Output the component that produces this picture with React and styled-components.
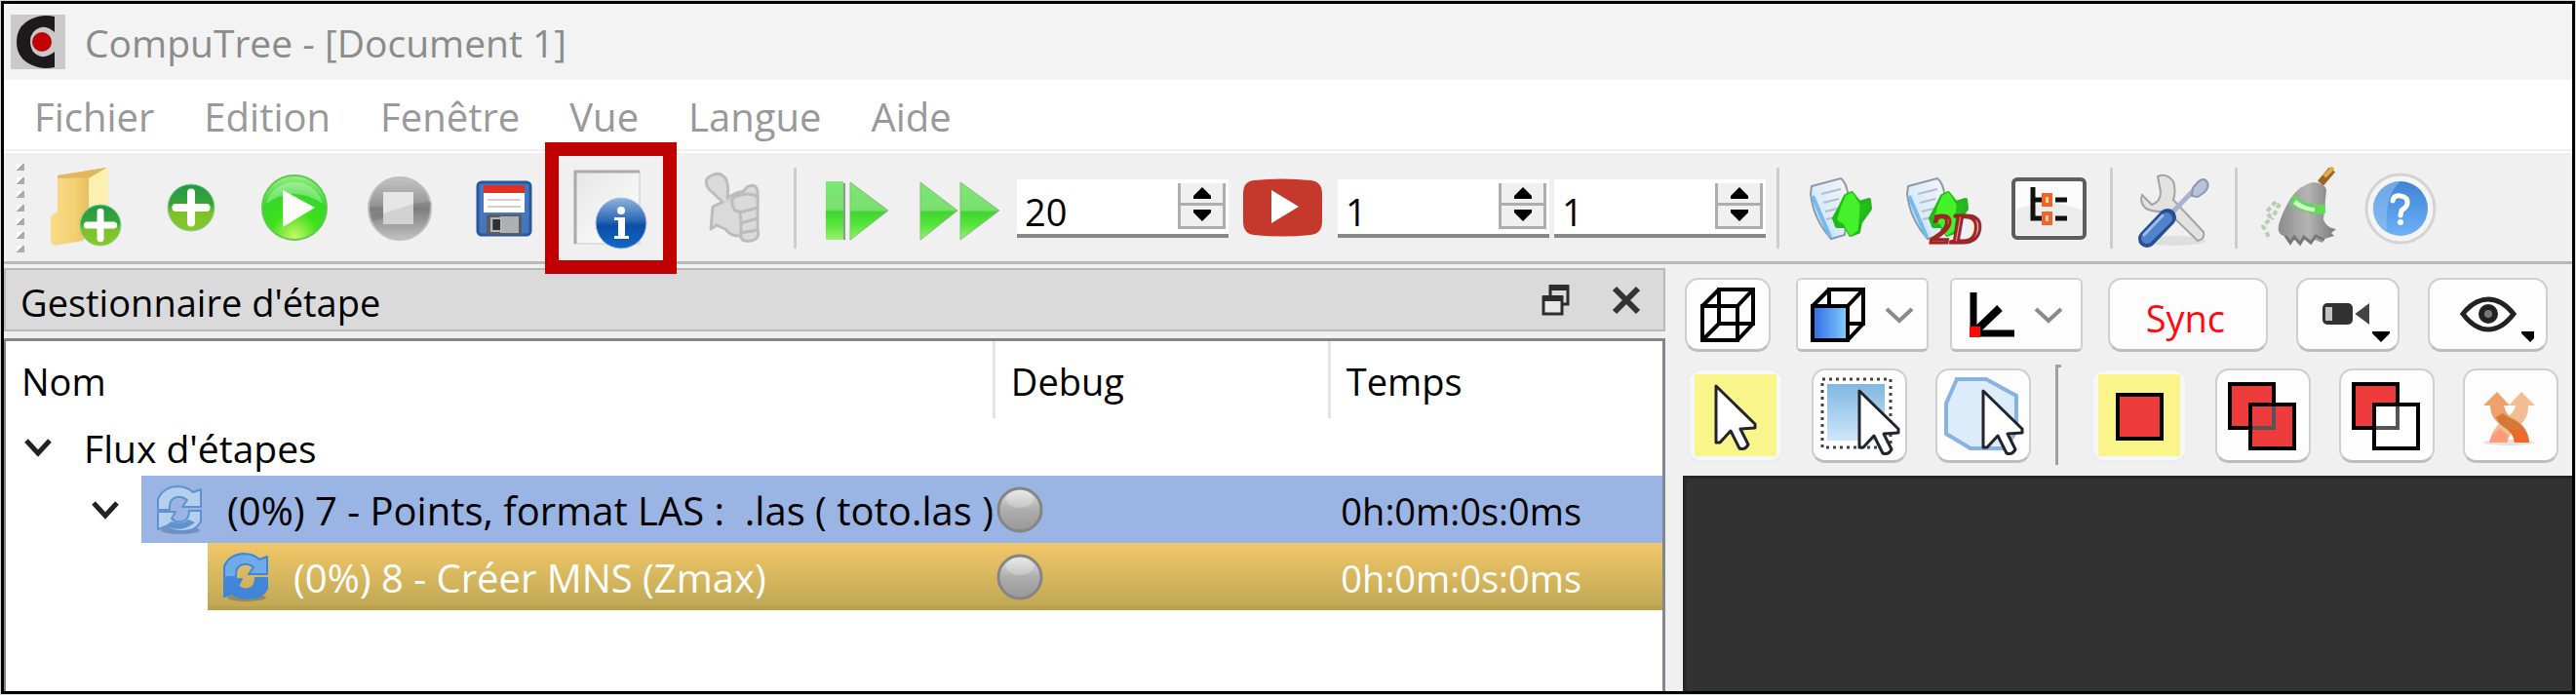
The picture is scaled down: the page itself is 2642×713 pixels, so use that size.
import React from "react";
import styled, { createGlobalStyle, css } from "styled-components";

const GlobalStyle = createGlobalStyle`
  * { box-sizing: border-box; }
  body { margin: 0; background: #d4dcd8; }
  button, input, th, td { font: inherit; color: inherit; }
  button { margin: 0; padding: 0; border: 0; background: none; }
  svg { display: block; }
`;

const Window = styled.div`
  display: flex;
  flex-direction: column;
  min-height: 100vh;
  border: 1px solid #d4dcd8;
  outline: 3px solid #000;
  outline-offset: -4px;
  padding: 3px;
  background: #f0f0f0;
  color: #000;
  font-family: "Open Sans", "Noto Sans", sans-serif;
  font-size: 38px;
  line-height: 52px;
`;

const TitleBar = styled.header`
  display: flex;
  align-items: center;
  gap: 20px;
  height: 78px;
  padding-left: 7px;
  background: #f3f3f3;
  color: #8b8b8b;
`;

const Title = styled.h1`
  margin: 0;
  padding-top: 2px;
  font-size: 39px;
  font-weight: 400;
`;

const MenuBar = styled.nav`
  display: flex;
  align-items: center;
  gap: 51px;
  height: 77px;
  padding: 4px 31px 0;
  background: #fff;
  border-bottom: 6px double #f0f0f0;
  color: #999;
  font-size: 40px;
`;

const MenuItem = styled.button`
  white-space: nowrap;
`;

const ToolBar = styled.div`
  display: flex;
  align-items: center;
  height: 112px;
  border-bottom: 3px solid #b8b8b8;
`;

const Grip = styled.div`
  display: flex;
  flex-direction: column;
  gap: 7px;
  padding: 0 10px 0 13px;
`;

const GripDot = styled.i`
  width: 8px;
  height: 7px;
  background: linear-gradient(135deg, #fff 45%, #aaa 46%);
`;

const Tool = styled.button`
  position: relative;
  flex: none;
  width: 107px;
  height: 109px;
`;

const Highlight = styled.span`
  position: absolute;
  z-index: 2;
  inset: -13px -17px -13px -11px;
  border: 14px solid #c00000;
  pointer-events: none;
`;

const Divider = styled.i`
  flex: none;
  width: 3px;
  height: 83px;
  margin: 0 9px;
  background: #cdcdcd;
  visibility: ${(p) => (p.$blank ? "hidden" : "visible")};
`;

const Spin = styled.div`
  display: flex;
  flex: none;
  width: 217px;
  height: 60px;
  margin: 0 2px 0 3px;
  padding-right: 3px;
  background: #fff;
  border-bottom: 4px solid #888;
`;

const SpinInput = styled.input`
  flex: 1;
  min-width: 0;
  padding: 10px 0 0 8px;
  border: 0;
  background: #fff;
  line-height: 40px;
`;

const SpinButtons = styled.div`
  display: flex;
  flex-direction: column;
  width: 49px;
  margin: 4px 0 5px;
  background: #f0f0f0;
  border: 3px solid #adadad;
  border-top: 0;
`;

const SpinButton = styled.button`
  display: flex;
  flex: 1;
  align-items: center;
  justify-content: center;
  & + & { border-top: 3px solid #adadad; }
`;

const Main = styled.main`
  display: grid;
  grid-template-columns: minmax(0, 11fr) minmax(0, 6fr);
  flex: 1;
`;

const Dock = styled.section`
  display: flex;
  flex-direction: column;
  gap: 7px;
  padding-top: 4px;
`;

const DockTitle = styled.div`
  display: flex;
  align-items: center;
  gap: 42px;
  height: 65px;
  padding: 0 23px 0 15px;
  border: 2px solid #b8b8b8;
  background: #dadada;
`;

const DockName = styled.h2`
  flex: 1;
  margin: 0;
  padding-top: 5px;
  font-size: 38px;
  font-weight: 400;
`;

const TreeFrame = styled.div`
  flex: 1;
  border: 3px solid #82878f;
  border-bottom: 0;
  border-left-width: 2px;
  background: #fff;
`;

const Tree = styled.table`
  width: 100%;
  table-layout: fixed;
  border-collapse: collapse;
  text-align: left;
`;

const HeadCell = styled.th`
  height: 79px;
  padding: 2px 16px 0;
  font-weight: 400;
  & + & { border-left: 3px solid #e5e5e5; }
`;

const fills = {
  none: css`background: transparent;`,
  blue: css`background: #9ab4e4;`,
  gold: css`
    background: linear-gradient(#f2c768, #c0a855 94%, #b9a14b 95%);
    color: #fff;
  `,
};

const Row = styled.tr`
  height: ${(p) => (p.$fill === "none" ? 59 : 69)}px;
`;

const Cell = styled.td`
  height: inherit;
  padding: 0 0 0 ${(p) => p.$inset || 0}px;
  ${(p) => fills[p.$fill]}
`;

const Branch = styled.div`
  display: flex;
  align-items: stretch;
  height: 100%;
  padding-left: ${(p) => p.$depth * 69}px;
`;

const Expander = styled.button`
  display: flex;
  flex: none;
  align-items: center;
  width: 70px;
  padding-left: 18px;
`;

const BranchLabel = styled.div`
  display: flex;
  flex: 1;
  align-items: center;
  gap: 24px;
  height: ${(p) => (p.$fill === "none" ? 59 : 69)}px;
  padding-left: ${(p) => (p.$fill === "none" ? 10 : 14)}px;
  font-size: ${(p) => (p.$fill === "none" ? 39 : 40)}px;
  white-space: pre;
  ${(p) => fills[p.$fill]}
`;

const RowText = styled.span`
  display: block;
  padding-top: 3px;
`;

const Document = styled.section`
  display: flex;
  flex-direction: column;
  padding-left: 18px;
`;

const ViewBar = styled.div`
  display: flex;
  align-items: flex-start;
  gap: ${(p) => p.$gap}px;
  padding: 14px 0 0 ${(p) => p.$inset}px;
  height: ${(p) => p.$height}px;
`;

const ButtonGroup = styled.div`
  display: flex;
  gap: ${(p) => p.$gap}px;
`;

const ViewButton = styled.button`
  display: flex;
  flex: none;
  align-items: center;
  justify-content: center;
  width: ${(p) => p.$width}px;
  height: 76px;
  border: 2px solid #cfcfcf;
  border-bottom: 3px solid #bdbdbd;
  border-radius: 14px;
  background: #fdfdfd;
`;

const ComboButton = styled(ViewButton)`
  gap: 20px;
  width: 136px;
  border-radius: 6px;
`;

const SyncButton = styled(ViewButton)`
  padding: 6px 6px 0 0;
  color: #ff0a14;
`;

const ModeButton = styled(ViewButton)`
  width: 98px;
  height: 97px;
  ${(p) => p.$active && css`
    border-color: #eaeef0;
    background: linear-gradient(#faf58a, #faf58a) center / 84px 84px no-repeat #f6f7f8;
  `}
`;

const ModeDivider = styled.i`
  flex: none;
  width: 6px;
  height: 103px;
  margin: -4px 2px 0 -4px;
  border-left: 3px solid #a0a0a0;
  border-top: 3px solid #a0a0a0;
`;

const Viewport = styled.div`
  flex: 1;
  border: solid #262626;
  border-width: 3px 0 0 3px;
  background: #323232;
`;

const Defs = styled.svg`
  position: absolute;
`;

function ToolIcon({ children }) {
  return (
    <svg width="107" height="109" viewBox="0 0 107 109" aria-hidden="true">
      {children}
    </svg>
  );
}

function Gradients() {
  return (
    <Defs width="0" height="0" aria-hidden="true">
      <defs>
        <linearGradient id="plus" x1="0" y1="0" x2="0" y2="1">
          <stop offset="0" stopColor="#1f9a48" /><stop offset=".45" stopColor="#3ba537" /><stop offset=".6" stopColor="#7cc12a" /><stop offset="1" stopColor="#86c82c" />
        </linearGradient>
        <radialGradient id="go" cx=".5" cy=".95" r=".95">
          <stop offset="0" stopColor="#c8f56a" /><stop offset=".4" stopColor="#3ee01c" /><stop offset=".7" stopColor="#35d82a" /><stop offset="1" stopColor="#9df08c" />
        </radialGradient>
        <linearGradient id="grey" x1="0" y1="0" x2="0" y2="1">
          <stop offset="0" stopColor="#c4c4c4" /><stop offset=".45" stopColor="#959595" /><stop offset=".5" stopColor="#7d7d7d" /><stop offset="1" stopColor="#c2c2c2" />
        </linearGradient>
        <linearGradient id="folder" x1="0" y1="0" x2="1" y2="0">
          <stop offset="0" stopColor="#f9dc88" /><stop offset=".45" stopColor="#f3cf72" /><stop offset="1" stopColor="#d6a645" />
        </linearGradient>
        <linearGradient id="info" x1="0" y1="0" x2="0" y2="1">
          <stop offset="0" stopColor="#8fb4dd" /><stop offset=".45" stopColor="#2b68b4" /><stop offset=".55" stopColor="#0d4ea6" /><stop offset="1" stopColor="#1268c8" />
        </linearGradient>
        <linearGradient id="page" x1="0" y1="0" x2="1" y2="1">
          <stop offset="0" stopColor="#e6e6e6" /><stop offset="1" stopColor="#ffffff" />
        </linearGradient>
        <linearGradient id="lime" x1="0" y1="0" x2="0" y2="1">
          <stop offset="0" stopColor="#7be873" /><stop offset=".48" stopColor="#7adf70" /><stop offset=".52" stopColor="#3fd62e" /><stop offset=".75" stopColor="#56e63c" /><stop offset="1" stopColor="#9cf070" />
        </linearGradient>
        <linearGradient id="sheet" x1="0" y1="1" x2="1" y2="0">
          <stop offset="0" stopColor="#8fd0fa" /><stop offset=".4" stopColor="#d8ebfb" /><stop offset="1" stopColor="#f4f4f8" />
        </linearGradient>
        <linearGradient id="help" x1="0" y1="0" x2="0" y2="1">
          <stop offset="0" stopColor="#3f83d4" /><stop offset="1" stopColor="#6db2f7" />
        </linearGradient>
        <linearGradient id="broom" x1="0" y1="0" x2="1" y2="0">
          <stop offset="0" stopColor="#8c8c8c" /><stop offset=".5" stopColor="#b4b4b4" /><stop offset="1" stopColor="#7a7a7a" />
        </linearGradient>
        <linearGradient id="ball" x1="0" y1="0" x2="0" y2="1">
          <stop offset="0" stopColor="#e6e6e6" /><stop offset=".5" stopColor="#adadad" /><stop offset="1" stopColor="#989898" />
        </linearGradient>
        <linearGradient id="face" x1="0" y1="0" x2="1" y2="0">
          <stop offset="0" stopColor="#3069e6" /><stop offset="1" stopColor="#84d0fb" />
        </linearGradient>
        <linearGradient id="area" x1="0" y1="0" x2="0" y2="1">
          <stop offset="0" stopColor="#7fb8de" /><stop offset="1" stopColor="#cfe6fb" />
        </linearGradient>
      </defs>
    </Defs>
  );
}

const PlusBall = ({ cx, cy, r }) => (
  <g>
    <circle cx={cx} cy={cy} r={r} fill="url(#plus)" stroke="#8fcf9a" strokeWidth="1" />
    <path d={`M${cx - r * 0.65} ${cy}H${cx + r * 0.65}M${cx} ${cy - r * 0.65}V${cy + r * 0.65}`} stroke="#fff" strokeWidth={r / 3} strokeLinecap="round" />
  </g>
);

const OpenIcon = () => (
  <ToolIcon>
    <path d="M55 22 76 13V88L60 94Z" fill="#fbf0b0" />
    <path d="M24 21 74 13 56 24V78L50 88 21 93 17 90V63L24 58Z" fill="url(#folder)" />
    <path d="M24 21 74 13 56 23 24 24Z" fill="#e0b75c" />
    <PlusBall cx={68} cy={72} r={21} />
  </ToolIcon>
);
const AddIcon = () => <ToolIcon><PlusBall cx={54} cy={54} r={24} /></ToolIcon>;
const PlayIcon = () => (
  <ToolIcon>
    <circle cx="53" cy="54" r="33" fill="url(#go)" stroke="#62c94e" strokeWidth="2" />
    <path d="M24 50A30 30 0 0 1 82 50Q52 30 24 50Z" fill="#fff" opacity=".3" />
    <path d="M41 36V74L74 54Z" fill="#fbfff6" />
  </ToolIcon>
);
const StopIcon = () => (
  <ToolIcon>
    <circle cx="54" cy="55" r="32" fill="url(#grey)" stroke="#bdbdbd" strokeWidth="2" />
    <path d="M24 62Q55 50 86 48V52Q60 58 26 68Z" fill="#777" opacity=".5" />
    <rect x="37" y="38" width="31" height="33" fill="#e6e6e6" />
    <path d="M37 60 68 50V71H37Z" fill="#d2d2d2" />
  </ToolIcon>
);
const SaveIcon = () => (
  <ToolIcon>
    <rect x="27" y="28" width="54" height="54" rx="4" fill="#4477bd" stroke="#2856a0" strokeWidth="3" />
    <rect x="33" y="31" width="42" height="28" fill="#fff" />
    <rect x="33" y="31" width="42" height="8" fill="#dd3122" />
    <path d="M37 46H71M37 53H71" stroke="#d0d0d0" strokeWidth="2" />
    <rect x="36" y="61" width="36" height="21" rx="2" fill="#5a5d62" />
    <rect x="50" y="63" width="19" height="17" fill="#aeb0b2" />
    <rect x="43" y="66" width="7" height="11" fill="#2e3136" /><rect x="41" y="65" width="10" height="13" fill="none" stroke="#b5b5b5" strokeWidth="2" />
  </ToolIcon>
);
const InfoIcon = () => (
  <ToolIcon>
    <rect x="20" y="17" width="66" height="74" fill="url(#page)" stroke="#c9c9c9" strokeWidth="1" />
    <path d="M20 91V17H86" fill="none" stroke="#a9a9a9" strokeWidth="3" />
    <circle cx="67" cy="70" r="26" fill="url(#info)" stroke="#a9c2e0" strokeWidth="1" />
    <circle cx="67" cy="57" r="4" fill="#fff" />
    <path d="M60 64H71V83H75V86H60V83H64V67H60Z" fill="#fff" />
  </ToolIcon>
);
const HandIcon = () => (
  <ToolIcon>
    <g fill="#dadada" stroke="#bcbcbc" strokeWidth="3" strokeLinejoin="round">
      <path d="M33 53 31 76 37 72 46 76Q52 84 62 83L72 76V52L52 44Z" />
      <path d="M44 49 29 35Q23 26 30 22Q40 16 46 24Q50 31 48 44L57 39 66 37" />
      <path d="M58 46Q54 40 64 38L68 33Q77 28 79 37V50L60 58Z" />
      <path d="M55 43Q70 37 79 43V54Q68 62 56 57Q50 48 55 43Z" />
      <path d="M61 59 79 54V65L62 70ZM62 70 79 65V77L62 80Z" />
      <path d="M62 80 79 77Q82 86 72 88Q60 90 62 80Z" />
    </g>
  </ToolIcon>
);
const StepIcon = () => (
  <ToolIcon>
    <path d="M21 27H39V87H21Z" fill="url(#lime)" /><path d="M40 29V87" stroke="#8a9a88" strokeWidth="2" />
    <path d="M46 28 85 57 46 87Z" fill="url(#lime)" stroke="#86b77e" strokeWidth="1" />
  </ToolIcon>
);
const ForwardIcon = () => (
  <ToolIcon>
    <path d="M11 28 49 57 11 87ZM52 28 92 57 52 87Z" fill="url(#lime)" stroke="#86b77e" strokeWidth="1" />
  </ToolIcon>
);
const VideoIcon = () => (
  <ToolIcon>
    <path d="M24 26Q53 23 82 26Q94 27 94 40V68Q94 81 82 82Q53 85 24 82Q13 81 13 68V40Q13 27 24 26Z" fill="#c5392d" />
    <path d="M42 36V70L70 53Z" fill="#fff" />
  </ToolIcon>
);
const ExportShape = () => (
  <g>
    <path d="M24 32 54 24Q60 28 62 44L58 82 44 86Q26 66 23 40Z" fill="url(#sheet)" stroke="#8c98a4" strokeWidth="2" />
    <path d="M34 40 54 35M36 49 52 45M38 58 50 55M39 66 48 64" stroke="#b7bdc6" strokeWidth="2" />
    <path d="M25 42 43 84" stroke="#74b9f0" strokeWidth="4" />
    <path d="M65 39 73 49 83 46 84 55 74 69 72 79 64 82 59 73 50 73 47 65 54 52 59 42Z" fill="#22c21a" stroke="#22b81c" strokeWidth="4" strokeLinejoin="round" />
    <path d="M65 40 72 51 71 68 70 77 64 81 58 70 52 66 56 52 60 43Z" fill="#45f22a" stroke="#45f22a" strokeWidth="3" strokeLinejoin="round" />
  </g>
);
const ExportIcon = () => <ToolIcon><ExportShape /></ToolIcon>;
const Export2dIcon = () => (
  <ToolIcon>
    <g transform="translate(-8 0)"><ExportShape /></g>
    <text x="39" y="90" fontFamily="Liberation Serif, serif" fontStyle="italic" fontSize="42" fill="#f4dcdc" stroke="#9d2525" strokeWidth="3">2D</text>
  </ToolIcon>
);
const StepTreeIcon = () => (
  <ToolIcon>
    <rect x="17" y="25" width="73" height="60" rx="4" fill="#fcfcfc" stroke="#5d5d5d" strokeWidth="4" />
    <path d="M20 56Q55 42 88 57V82H20Z" fill="#ececec" />
    <path d="M37 33V65H46M37 46H46M60 46H72M60 65H72" stroke="#111" strokeWidth="5" fill="none" />
    <path d="M48 41H55V51H48ZM48 60H55V70H48Z" fill="#ffd0a0" stroke="#f0642a" strokeWidth="4" />
  </ToolIcon>
);
const SettingsIcon = () => (
  <ToolIcon>
    <ellipse cx="54" cy="88" rx="32" ry="5" fill="#dedede" />
    <path d="M37 22Q46 18 53 27Q56 37 53 46L84 79Q86 86 78 88L46 57Q35 60 25 55Q18 49 21 41L31 51Q40 48 40 38Z" fill="#e2e2e2" stroke="#a3a3a3" strokeWidth="2" />
    <path d="M52 59 75 35" stroke="#a9b3cb" strokeWidth="5" />
    <path d="M73 34 78 28Q84 22 88 28 90 33 85 38L78 43 72 42Z" fill="#b8c3da" stroke="#8d97b0" strokeWidth="2" />
    <path d="M26 86 47 64" stroke="#274f93" strokeWidth="18" strokeLinecap="round" />
    <path d="M26 85 46 65" stroke="#5083cc" strokeWidth="12" strokeLinecap="round" />
    <path d="M23 82 42 62" stroke="#9dbde8" strokeWidth="3" strokeLinecap="round" />
  </ToolIcon>
);
const CleanIcon = () => (
  <ToolIcon>
    <path d="M30 48 21 58 25 65 17 73 23 84M34 50 26 66" fill="none" stroke="#b9ccb6" strokeWidth="4" strokeDasharray="5 3" />
    <path d="M76 29 88 15" stroke="#9c6523" strokeWidth="8" /><path d="M80 22 89 13" stroke="#e2ad49" strokeWidth="4" />
    <path d="M68 28Q80 28 82 36L79 66Q82 75 92 76L87 80 90 83 80 86 78 90 70 87 66 91 60 87 54 91 50 87 43 90 41 84Q31 82 33 72Q36 60 45 45Q54 31 68 28Z" fill="url(#broom)" />
    <path d="M49 41Q62 54 81 50V60Q60 63 45 50Z" fill="#5fdc55" /><path d="M51 46Q60 54 70 54V58Q58 58 48 50Z" fill="#d9f6d3" />
    <path d="M40 83 45 90 49 84 55 91 59 84 66 90 71 83 80 87" fill="none" stroke="#777" strokeWidth="3" />
  </ToolIcon>
);
const HelpIcon = () => (
  <ToolIcon>
    <circle cx="51" cy="55" r="35" fill="#f4f4f4" stroke="#d3d3d3" strokeWidth="3" />
    <circle cx="51" cy="55" r="28" fill="url(#help)" />
    <path d="M27 70A28 28 0 0 1 51 27Q34 42 37 78Z" fill="#9bc7f2" opacity=".5" />
    <path d="M43 47Q44 41 51 42Q59 43 58 50Q57 54 52 57L51 62" fill="none" stroke="#fff" strokeWidth="5" strokeLinecap="round" />
    <circle cx="51" cy="69" r="3" fill="#fff" />
  </ToolIcon>
);

const ChevronIcon = () => (
  <svg width="30" height="20" viewBox="0 0 30 20"><path d="M3 3 15 16 27 3" fill="none" stroke="#222" strokeWidth="5" /></svg>
);
const SyncIcon = ({ faded }) => {
  const main = faded ? "#5e93d0" : "#3f86d8";
  const light = faded ? "#b4d0ee" : "#6fabea";
  return (
    <svg width="50" height="52" viewBox="0 0 50 52">
      <ellipse cx="26" cy="47" rx="20" ry="4" fill="#2b3d66" opacity=".3" />
      <g stroke={main} strokeWidth="2" strokeLinejoin="round">
        <path d="M3 26V15Q8 3 22 2Q33 2 39 8L47 5V23H28L33 16Q28 12 22 13Q14 15 15 26Z" fill={light} />
        <path d="M47 27V38Q42 48 28 48Q17 48 11 43L3 46V28H21L17 35Q22 40 28 38Q35 36 35 27Z" fill={faded ? light : main} />
      </g>
      <path d="M11 42Q26 51 41 39L34 36Q28 42 17 38Z" fill={main} />
    </svg>
  );
};
const BallIcon = () => (
  <svg width="50" height="50" viewBox="0 0 50 50">
    <circle cx="25" cy="25" r="22" fill="url(#ball)" stroke="#858585" strokeWidth="3" />
    <ellipse cx="25" cy="14" rx="14" ry="9" fill="#fff" opacity=".25" />
  </svg>
);
const Arrow = ({ up }) => (
  <svg width="18" height="12" viewBox="0 0 18 12"><path d={up ? "M9 0 18 9V12H0V9Z" : "M9 12 18 3V0H0V3Z"} fill="#000" /></svg>
);
const FloatIcon = () => (
  <svg width="30" height="32" viewBox="0 0 30 32">
    <path d="M9 12V2H27V20H20" fill="none" stroke="#2c2c2c" strokeWidth="3" /><path d="M8 3H28" stroke="#2c2c2c" strokeWidth="6" />
    <rect x="2" y="13" width="19" height="17" fill="#e8e8e8" stroke="#2c2c2c" strokeWidth="3" /><path d="M1 14H22" stroke="#2c2c2c" strokeWidth="6" />
  </svg>
);
const CloseIcon = () => (
  <svg width="30" height="30" viewBox="0 0 30 30"><path d="M3 3 27 27M27 3 3 27" stroke="#333" strokeWidth="6" /></svg>
);
const CubeIcon = ({ solid }) => (
  <svg width="56" height="56" viewBox="0 0 56 56" fill="none" stroke="#000" strokeWidth="4">
    {solid
      ? <path d="M19 19V2H54V37H38M2 19 19 2M38 19 54 2M38 54 54 37" />
      : <path d="M19 2H54V37H19ZM2 19 19 2M38 19 54 2M38 54 54 37M2 54 19 37" />}
    <rect x="2" y="19" width="36" height="35" fill={solid ? "url(#face)" : "none"} />
  </svg>
);
const AxesIcon = () => (
  <svg width="46" height="46" viewBox="0 0 46 46">
    <path d="M4 0V42H46" fill="none" stroke="#000" strokeWidth="7" /><path d="M8 38 31 16" stroke="#000" strokeWidth="8" />
    <rect x="0" y="35" width="11" height="11" fill="#fa0a0a" />
  </svg>
);
const DropIcon = () => (
  <svg width="30" height="18" viewBox="0 0 30 18"><path d="M2 3 15 15 28 3" fill="none" stroke="#8a8a8a" strokeWidth="4" /></svg>
);
const CameraIcon = () => (
  <svg width="86" height="60" viewBox="0 0 86 60">
    <rect x="17" y="18" width="31" height="22" rx="5" fill="#323232" /><rect x="20" y="22" width="7" height="14" fill="#c4c4c4" />
    <path d="M52 29 64 20V38Z" fill="#444" stroke="#444" strokeWidth="2" />
    <path d="M68 47H86V49L77 58 68 49Z" fill="#000" />
  </svg>
);
const EyeIcon = () => (
  <svg width="94" height="60" viewBox="0 0 94 60">
    <path d="M21 29Q33 14 47 14Q61 14 73 29Q61 45 47 45Q33 45 21 29Z" fill="#fff" stroke="#222" strokeWidth="5" />
    <circle cx="47" cy="29" r="10" fill="#222" /><circle cx="47" cy="29" r="4" fill="#777" />
    <path d="M81 47H99V49L90 58 81 49Z" fill="#000" />
  </svg>
);
const Pointer = ({ x, y }) => (
  <path transform={`translate(${x} ${y})`} d="M0 0V58L4 58 15 46 24 64Q30 66 33 60L25 44 40 43V39Z" fill="#fff" stroke="#23232d" strokeWidth="3" strokeLinejoin="round" />
);
const ModeArt = ({ children }) => <svg width="90" height="88" viewBox="0 0 90 88">{children}</svg>;
const Overlap = ({ fill }) => (
  <ModeArt>
    <g stroke="#000" strokeWidth="4">
      <rect x="11" y="12" width="45" height="45" fill="#ee3c3c" /><rect x="32" y="33" width="45" height="45" fill={fill} />
    </g>
    <path d="M34 57H56V35" fill="none" stroke="#555" strokeWidth="4" />
  </ModeArt>
);
const CrossIcon = () => (
  <ModeArt>
    <ellipse cx="43" cy="72" rx="26" ry="3" fill="#e2e2e2" />
    <path d="M24 72Q24 60 36 50 49 42 50 34H43L56 20 70 34H63Q64 48 50 58 43 64 42 72Z" fill="#f3bd94" />
    <path d="M23 72Q24 64 34 58L42 64 41 72Z" fill="#fa9d78" />
    <path d="M17 34 31 20 44 34H38Q40 44 49 48 63 56 64 72H49Q48 62 38 56 24 48 24 34Z" fill="#f0a06a" />
    <path d="M30 46 37 42Q42 46 49 49 63 57 64 72H49Q48 62 38 56Q32 52 30 46Z" fill="#d47a38" />
    <path d="M44 59 56 58Q63 64 64 72H49Q49 64 44 59Z" fill="#f0682a" />
  </ModeArt>
);

const menus = ["Fichier", "Edition", "Fenêtre", "Vue", "Langue", "Aide"];

function ToolButton({ label, icon: Icon, highlighted }) {
  return (
    <Tool type="button" aria-label={label}>
      <Icon />
      {highlighted && <Highlight />}
    </Tool>
  );
}

function SpinBox({ label, value }) {
  return (
    <Spin>
      <SpinInput type="text" inputMode="numeric" aria-label={label} defaultValue={value} />
      <SpinButtons>
        <SpinButton type="button" aria-label="Augmenter"><Arrow up /></SpinButton>
        <SpinButton type="button" aria-label="Diminuer"><Arrow /></SpinButton>
      </SpinButtons>
    </Spin>
  );
}

function StepRow({ depth, fill, label, icon, time, open }) {
  return (
    <Row $fill={fill}>
      <Cell $fill="none">
        <Branch $depth={depth}>
          {open && <Expander type="button" aria-label="Replier"><ChevronIcon /></Expander>}
          <BranchLabel $fill={fill}>{icon}<RowText>{label}</RowText></BranchLabel>
        </Branch>
      </Cell>
      <Cell $fill={fill} $inset={2}>{time && <BallIcon />}</Cell>
      <Cell $fill={fill} $inset={12}><RowText>{time}</RowText></Cell>
    </Row>
  );
}

export default function App() {
  return (
    <Window>
      <GlobalStyle />
      <Gradients />
      <TitleBar>
        <svg width="56" height="56" viewBox="0 0 56 56" aria-hidden="true">
          <rect width="56" height="56" fill="#c9c9c9" />
          <path d="M45 2V18Q38 12 31 13Q20 16 20 28Q20 40 31 43Q38 44 45 38V54Q36 56 28 54Q6 48 6 28Q6 8 28 2Q36 0 45 2Z" fill="#1c1a1a" />
          <circle cx="32" cy="28" r="10" fill="#c00009" />
        </svg>
        <Title>CompuTree - [Document 1]</Title>
      </TitleBar>
      <MenuBar aria-label="Menu">
        {menus.map((m) => <MenuItem type="button" key={m}>{m}</MenuItem>)}
      </MenuBar>
      <ToolBar role="toolbar">
        <Grip>{[0, 1, 2, 3, 4, 5, 6].map((n) => <GripDot key={n} />)}</Grip>
        <ToolButton label="Ouvrir" icon={OpenIcon} />
        <ToolButton label="Ajouter" icon={AddIcon} />
        <ToolButton label="Lancer" icon={PlayIcon} />
        <ToolButton label="Arrêter" icon={StopIcon} />
        <ToolButton label="Enregistrer" icon={SaveIcon} />
        <ToolButton label="Informations" icon={InfoIcon} highlighted />
        <Divider $blank />
        <ToolButton label="Mode manuel" icon={HandIcon} />
        <Divider />
        <ToolButton label="Pas à pas" icon={StepIcon} />
        <ToolButton label="Avance rapide" icon={ForwardIcon} />
        <SpinBox label="Vitesse" value="20" />
        <ToolButton label="Vidéo" icon={VideoIcon} />
        <SpinBox label="Début" value="1" />
        <SpinBox label="Pas" value="1" />
        <Divider />
        <ToolButton label="Exporter" icon={ExportIcon} />
        <ToolButton label="Exporter en 2D" icon={Export2dIcon} />
        <ToolButton label="Arbre des étapes" icon={StepTreeIcon} />
        <Divider />
        <ToolButton label="Configuration" icon={SettingsIcon} />
        <Divider />
        <ToolButton label="Nettoyer" icon={CleanIcon} />
        <ToolButton label="Aide" icon={HelpIcon} />
      </ToolBar>
      <Main>
        <Dock>
          <DockTitle>
            <DockName>Gestionnaire d'étape</DockName>
            <button type="button" aria-label="Détacher"><FloatIcon /></button>
            <button type="button" aria-label="Fermer"><CloseIcon /></button>
          </DockTitle>
          <TreeFrame>
            <Tree>
              <colgroup><col /><col width="344" /><col width="342" /></colgroup>
              <thead>
                <tr><HeadCell>Nom</HeadCell><HeadCell>Debug</HeadCell><HeadCell>Temps</HeadCell></tr>
              </thead>
              <tbody>
                <StepRow depth={0} fill="none" open label="Flux d'étapes" />
                <StepRow depth={1} fill="blue" open icon={<SyncIcon faded />} label="(0%) 7 - Points, format LAS :  .las ( toto.las )" time="0h:0m:0s:0ms" />
                <StepRow depth={3} fill="gold" icon={<SyncIcon />} label="(0%) 8 - Créer MNS (Zmax)" time="0h:0m:0s:0ms" />
              </tbody>
            </Tree>
          </TreeFrame>
        </Dock>
        <Document>
          <ViewBar $gap={26} $height={93} $inset={2}>
            <ViewButton type="button" $width={88} aria-label="Vue filaire"><CubeIcon /></ViewButton>
            <ButtonGroup $gap={22}>
              <ComboButton type="button" aria-label="Point de vue"><CubeIcon solid /><DropIcon /></ComboButton>
              <ComboButton type="button" aria-label="Axes"><AxesIcon /><DropIcon /></ComboButton>
            </ButtonGroup>
            <ButtonGroup $gap={29}>
              <SyncButton type="button" $width={164}>Sync</SyncButton>
              <ViewButton type="button" $width={106} aria-label="Caméra"><CameraIcon /></ViewButton>
              <ViewButton type="button" $width={123} aria-label="Affichage"><EyeIcon /></ViewButton>
            </ButtonGroup>
          </ViewBar>
          <ViewBar $gap={29} $height={124} $inset={5}>
            <ModeButton type="button" $active aria-label="Sélection simple"><ModeArt><Pointer x={25} y={14} /></ModeArt></ModeButton>
            <ModeButton type="button" aria-label="Sélection rectangle">
              <ModeArt>
                <rect x="12" y="12" width="59" height="58" fill="url(#area)" />
                <rect x="7" y="7" width="70" height="70" fill="none" stroke="#444" strokeWidth="3" strokeDasharray="3 4" />
                <Pointer x={45} y={19} />
              </ModeArt>
            </ModeButton>
            <ModeButton type="button" aria-label="Sélection polygone">
              <ModeArt>
                <path d="M18 7H48L79 24V60L68 78H32L7 63V32Z" fill="#dcecfb" stroke="#86b3e2" strokeWidth="4" />
                <Pointer x={45} y={19} />
              </ModeArt>
            </ModeButton>
            <ModeDivider />
            <ModeButton type="button" $active aria-label="Remplacer">
              <ModeArt><rect x="23" y="23" width="45" height="45" fill="#ee3c3c" stroke="#000" strokeWidth="4" /></ModeArt>
            </ModeButton>
            <ModeButton type="button" aria-label="Ajouter à la sélection"><Overlap fill="#ee3c3c" /></ModeButton>
            <ModeButton type="button" aria-label="Retirer de la sélection"><Overlap fill="#fff" /></ModeButton>
            <ModeButton type="button" aria-label="Inverser la sélection"><CrossIcon /></ModeButton>
          </ViewBar>
          <Viewport />
        </Document>
      </Main>
    </Window>
  );
}
